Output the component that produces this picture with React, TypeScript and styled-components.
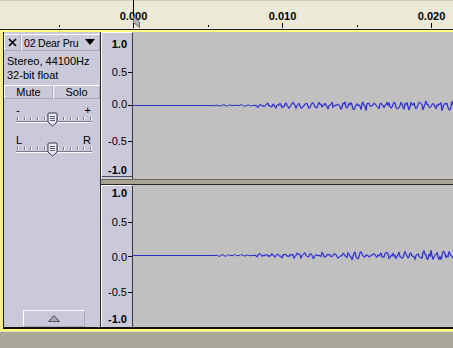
import React from 'react';
import styled, { createGlobalStyle, css } from 'styled-components';

const GlobalStyle = createGlobalStyle`
  html, body { margin: 0; padding: 0; }
  body { background: #ACA899; font-family: "Liberation Sans", Arial, sans-serif; }
  * { box-sizing: border-box; }
`;

const LAV = '#C9C9D9';
const WAVE_BG = '#C0C0C0';
const YELLOW = '#FFFF80';

const Page = styled.div`
  width: 453px;
  height: 348px;
  overflow: hidden;
  display: flex;
  flex-direction: column;
  background: #aca899;
  font-family: "Liberation Sans", Arial, sans-serif;
  font-size: 11px;
  color: #000;
`;

/* ---------- time ruler ---------- */
const Ruler = styled.div`
  position: relative;
  flex: none;
  height: 29px;
  background: #ece9d8;
  border-top: 1px solid #d2cebe;
`;

const TimeLabel = styled.span<{ $x: number }>`
  position: absolute;
  top: 9px;
  left: ${(p) => p.$x}px;
  transform: translateX(-50%);
  font-weight: 700;
  font-size: 11px;
  line-height: 12px;
  white-space: nowrap;
  color: #000;
`;

const TimeTick = styled.span<{ $x: number; $major?: boolean }>`
  position: absolute;
  left: ${(p) => p.$x}px;
  top: ${(p) => (p.$major ? 22 : 24)}px;
  width: 1px;
  height: ${(p) => (p.$major ? 5 : 2)}px;
  background: #000;
`;

const CursorLine = styled.span<{ $x: number }>`
  position: absolute;
  left: ${(p) => p.$x}px;
  top: -1px;
  width: 1px;
  height: 22px;
  background: #000;
`;

const CursorFlag = styled.svg<{ $x: number }>`
  position: absolute;
  left: ${(p) => p.$x}px;
  top: 14px;
`;

/* ---------- track frame ---------- */
const TrackOuter = styled.div`
  flex: none;
  border-top: 1px solid #1c1c1c;
  border-bottom: 1px solid #e8e4aa;
`;

const TrackFocus = styled.div`
  border-top: 2px solid ${YELLOW};
  border-left: 3px solid #f2ee8a;
  border-bottom: 2px solid ${YELLOW};
`;

const TrackBody = styled.div`
  display: flex;
  height: 297px;
  border-left: 1px solid #1c1c1c;
  border-bottom: 2px solid #101010;
`;

/* ---------- control panel ---------- */
const ControlPanel = styled.div`
  flex: none;
  width: 97px;
  display: flex;
  flex-direction: column;
  background: ${LAV};
  border-right: 1px solid #2a2a2a;
  padding-top: 2px;
`;

const bevel = css`
  border-top: 1px solid #ffffff;
  border-left: 1px solid #ffffff;
  border-bottom: 1px solid #a8a8b8;
  border-right: 1px solid #a8a8b8;
`;

const HeaderRow = styled.div`
  display: flex;
  height: 17px;
`;

const CloseBox = styled.div`
  ${bevel};
  flex: none;
  width: 17px;
  display: flex;
  align-items: center;
  justify-content: center;
`;

const NameBox = styled.div`
  ${bevel};
  flex: 1;
  display: flex;
  align-items: center;
  padding-left: 2px;
  padding-right: 4px;
  font-size: 10.5px;
  letter-spacing: -0.2px;
  white-space: nowrap;
  overflow: hidden;
`;

const NameText = styled.span`
  flex: 1;
  overflow: hidden;
`;

const DropArrow = styled.span`
  flex: none;
  width: 0;
  height: 0;
  border-left: 5px solid transparent;
  border-right: 5px solid transparent;
  border-top: 6px solid #000;
  margin-top: -2px;
`;

const InfoBlock = styled.div`
  margin-top: 3px;
  padding-left: 3px;
  display: flex;
  flex-direction: column;
`;

const InfoLine = styled.div`
  height: 14px;
  line-height: 14px;
  white-space: nowrap;
`;

const ButtonRow = styled.div`
  display: grid;
  grid-template-columns: 49px 1fr;
  margin-top: 3px;
  height: 14px;
`;

const ToggleButton = styled.div`
  ${bevel};
  display: flex;
  align-items: center;
  justify-content: center;
  line-height: 12px;
`;

const SliderWrap = styled.div<{ $gap: number }>`
  margin-top: ${(p) => p.$gap}px;
  padding: 0 9px 0 12px;
  display: flex;
  flex-direction: column;
`;

const SliderLabels = styled.div`
  display: flex;
  justify-content: space-between;
  height: 10px;
  line-height: 10px;
  font-size: 11px;
`;

const SliderSvg = styled.svg`
  display: block;
  overflow: visible;
`;

const MinimizeButton = styled.div`
  ${bevel};
  margin-top: auto;
  margin-left: 19px;
  width: 62px;
  height: 17px;
  display: flex;
  align-items: center;
  justify-content: center;
`;

/* ---------- channels ---------- */
const Channels = styled.div`
  flex: 1;
  display: flex;
  flex-direction: column;
  min-width: 0;
`;

const ChannelRow = styled.div<{ $h: number }>`
  flex: none;
  height: ${(p) => p.$h}px;
  display: flex;
`;

const VRuler = styled.div<{ $bottomLine?: boolean }>`
  position: relative;
  flex: none;
  width: 32px;
  background: ${LAV};
  border-top: 1px solid #ffffff;
  border-left: 1px solid #ffffff;
  border-right: 1px solid #3a3a3a;
  ${(p) =>
    p.$bottomLine &&
    css`
      &::after {
        content: '';
        position: absolute;
        left: 0;
        right: 0;
        bottom: 2px;
        height: 1px;
        background: #4a4a58;
      }
    `}
`;

const VLabel = styled.span<{ $y: number; $bold?: boolean }>`
  position: absolute;
  right: 5px;
  top: ${(p) => p.$y}px;
  transform: translateY(-50%);
  font-size: 11px;
  line-height: 12px;
  font-weight: ${(p) => (p.$bold ? 700 : 400)};
  white-space: nowrap;
`;

const VTick = styled.span<{ $y: number }>`
  position: absolute;
  right: 0;
  top: ${(p) => p.$y}px;
  width: 4px;
  height: 1px;
  background: #000;
`;

const WaveArea = styled.div`
  flex: 1;
  background: ${WAVE_BG};
  overflow: hidden;
`;

const WaveSvg = styled.svg`
  display: block;
`;

const Separator = styled.div`
  flex: none;
  height: 6px;
  background: #a9a595;
  border-top: 1px solid #6c6a5c;
  border-bottom: 1px solid #262626;
`;

const BottomFill = styled.div`
  flex: 1;
  background: #aca899;
`;

/* ---------- data ---------- */
function mulberry32(a: number) {
  return function () {
    a |= 0;
    a = (a + 0x6d2b79f5) | 0;
    let t = Math.imul(a ^ (a >>> 15), 1 | a);
    t = (t + Math.imul(t ^ (t >>> 7), 61 | t)) ^ t;
    return ((t ^ (t >>> 14)) >>> 0) / 4294967296;
  };
}

function envelope(xa: number): number {
  if (xa < 213) return 0;
  if (xa < 236) return 0.9;
  if (xa < 241) return 0.1;
  if (xa < 252) return 0.9;
  if (xa < 257) return 0.25;
  if (xa < 300) return 1.7 + ((xa - 257) / 43) * 1.1;
  return 2.8 + ((xa - 300) / 153) * 1.3;
}

function makeWave(seed: number, scale: number, center: number) {
  const rnd = mulberry32(seed);
  const pts: string[] = [];
  const active: string[] = [];
  let phase = rnd() * 6;
  let mod = 1;
  for (let x = 0; x <= 320; x++) {
    const xa = 133 + x;
    mod = 0.7 * mod + 0.3 * (0.4 + 1.3 * rnd());
    phase += (2 * Math.PI) / (4.5 + rnd() * 4);
    const env = envelope(xa) * scale * mod;
    const v = env * (0.65 * Math.sin(phase) + 0.6 * (rnd() * 2 - 1));
    const p = `${x},${(center - v).toFixed(2)}`;
    pts.push(p);
    if (xa >= 255) active.push(p);
  }
  return { all: pts.join(' '), active: active.join(' ') };
}

type LabelSpec = { text: string; y: number; bold?: boolean; tick?: number };

const ch1Labels: LabelSpec[] = [
  { text: '1.0', y: 10.5, bold: true },
  { text: '0.5', y: 39, tick: 39 },
  { text: '0.0', y: 71, tick: 72 },
  { text: '-0.5', y: 108, tick: 108 },
  { text: '-1.0', y: 136.5, bold: true },
];

const ch2Labels: LabelSpec[] = [
  { text: '1.0', y: 6.5, bold: true },
  { text: '0.5', y: 36, tick: 36 },
  { text: '0.0', y: 70.5, tick: 70 },
  { text: '-0.5', y: 106, tick: 106 },
  { text: '-1.0', y: 133, bold: true },
];

const SLIDER_W = 76;

function SliderTrack() {
  const ticks = Array.from({ length: 12 }, (_, i) => Math.round(1 + (i * (SLIDER_W - 3)) / 11));
  const cx = 36.5;
  return (
    <SliderSvg width={SLIDER_W} height={13} viewBox={`0 0 ${SLIDER_W} 13`}>
      {ticks.map((t) => (
        <g key={t}>
          <rect x={t} y={2} width={1} height={3} fill="#7a7a8c" />
          <rect x={t + 1} y={2} width={1} height={3} fill="#ffffff" />
        </g>
      ))}
      <rect x={0} y={6} width={SLIDER_W} height={1} fill="#7a7a8c" />
      <rect x={0} y={7} width={SLIDER_W} height={1} fill="#ffffff" />
      <path
        d={`M${cx - 4.5},-1 Q${cx - 4.5},-2 ${cx - 3.5},-2 L${cx + 3.5},-2 Q${cx + 4.5},-2 ${cx + 4.5},-1 L${cx + 4.5},7 L${cx},11 L${cx - 4.5},7 Z`}
        fill="#ececf4"
        stroke="#34344a"
        strokeWidth={1}
      />
      <rect x={cx - 2.5} y={1} width={5} height={1} fill="#5a5a70" />
      <rect x={cx - 2.5} y={3} width={5} height={1} fill="#5a5a70" />
      <rect x={cx - 2.5} y={5} width={5} height={1} fill="#5a5a70" />
    </SliderSvg>
  );
}

function Channel({
  height,
  labels,
  center,
  seed,
  scale,
  bottomLine,
}: {
  height: number;
  labels: LabelSpec[];
  center: number;
  seed: number;
  scale: number;
  bottomLine?: boolean;
}) {
  const wave = React.useMemo(() => makeWave(seed, scale, center + 0.5), [seed, scale, center]);
  return (
    <ChannelRow $h={height}>
      <VRuler $bottomLine={bottomLine}>
        {labels.map((l) => (
          <React.Fragment key={l.text}>
            <VLabel $y={l.y} $bold={l.bold}>
              {l.text}
            </VLabel>
            {l.tick !== undefined && <VTick $y={l.tick} />}
          </React.Fragment>
        ))}
      </VRuler>
      <WaveArea>
        <WaveSvg width={320} height={height}>
          <polyline points={wave.active} fill="none" stroke="#8c8ce4" strokeWidth={1.8} strokeLinejoin="round" />
          <polyline points={wave.all} fill="none" stroke="#2c2cbe" strokeWidth={1} />
        </WaveSvg>
      </WaveArea>
    </ChannelRow>
  );
}

export default function App() {
  return (
    <Page>
      <GlobalStyle />
      <Ruler>
        <TimeTick $x={59} />
        <TimeTick $x={208} />
        <TimeTick $x={357} />
        <TimeTick $x={133} $major />
        <TimeTick $x={282} $major />
        <TimeTick $x={431} $major />
        <TimeLabel $x={133.5}>0.000</TimeLabel>
        <TimeLabel $x={282.5}>0.010</TimeLabel>
        <TimeLabel $x={431.5}>0.020</TimeLabel>
        <CursorLine $x={133} />
        <CursorFlag $x={133} width={9} height={14} viewBox="0 0 9 14">
          <polygon points="0.5,1.5 6.5,7 6.5,12.5 0.5,7.5" fill="#b4b4b4" stroke="#6a6a6a" strokeWidth={1} />
        </CursorFlag>
      </Ruler>
      <TrackOuter>
        <TrackFocus>
          <TrackBody>
            <ControlPanel>
              <HeaderRow>
                <CloseBox>
                  <svg width={9} height={9} viewBox="0 0 9 9">
                    <path d="M1,1 L8,8 M8,1 L1,8" stroke="#000" strokeWidth={1.6} />
                  </svg>
                </CloseBox>
                <NameBox>
                  <NameText>02 Dear Pru</NameText>
                  <DropArrow />
                </NameBox>
              </HeaderRow>
              <InfoBlock>
                <InfoLine>Stereo, 44100Hz</InfoLine>
                <InfoLine>32-bit float</InfoLine>
              </InfoBlock>
              <ButtonRow>
                <ToggleButton>Mute</ToggleButton>
                <ToggleButton>Solo</ToggleButton>
              </ButtonRow>
              <SliderWrap $gap={6}>
                <SliderLabels>
                  <span>-</span>
                  <span>+</span>
                </SliderLabels>
                <SliderTrack />
              </SliderWrap>
              <SliderWrap $gap={7}>
                <SliderLabels>
                  <span>L</span>
                  <span>R</span>
                </SliderLabels>
                <SliderTrack />
              </SliderWrap>
              <MinimizeButton>
                <svg width={12} height={7} viewBox="0 0 12 7">
                  <polygon points="6,0.5 11.5,6.5 0.5,6.5" fill="#a8a8b4" stroke="#505058" strokeWidth={1} />
                </svg>
              </MinimizeButton>
            </ControlPanel>
            <Channels>
              <Channel height={147} labels={ch1Labels} center={73} seed={7} scale={1} bottomLine />
              <Separator />
              <Channel height={142} labels={ch2Labels} center={70} seed={19} scale={0.9} />
            </Channels>
          </TrackBody>
        </TrackFocus>
      </TrackOuter>
      <BottomFill />
    </Page>
  );
}
